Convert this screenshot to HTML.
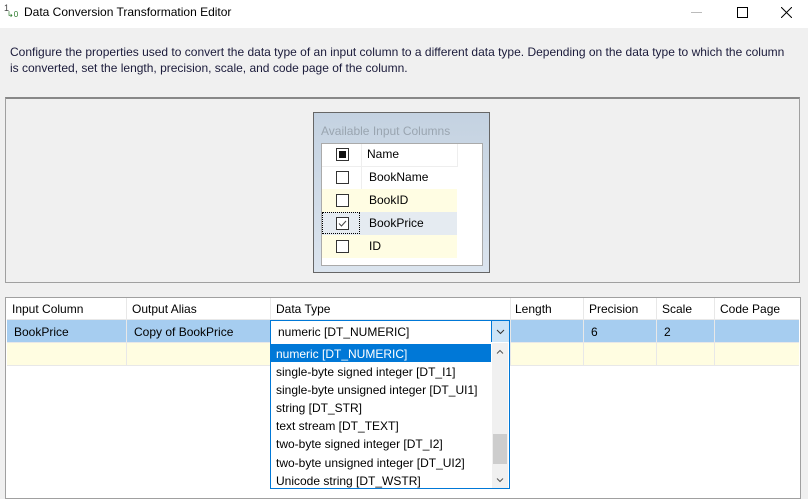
<!DOCTYPE html><html><head><style>
body{margin:0;width:808px;height:493px;background:#f0f0f0;font-family:"Segoe UI","Liberation Sans",sans-serif;font-size:12px;color:#000;position:relative;overflow:hidden}
.a{position:absolute}
.t{white-space:nowrap}
.cb{position:absolute;width:11px;height:11px;border:1px solid #333;background:#fff}
</style></head><body>
<div class="a" style="left:0;top:0;width:808px;height:28px;background:#fff"></div>
<div class="a t" style="left:4px;top:3px;font-size:9px;color:#444">1</div>
<div class="a t" style="left:7px;top:10px;font-size:8px;color:#2a7a2a">↳0</div>
<div class="a t" style="left:24px;top:5px;font-size:12px">Data Conversion Transformation Editor</div>
<div class="a" style="left:691px;top:12px;width:11px;height:1px;background:#bbb"></div>
<div class="a" style="left:737px;top:7px;width:9px;height:9px;border:1px solid #000"></div>
<svg class="a" style="left:781px;top:7px" width="11" height="11"><path d="M0 0L11 11M11 0L0 11" stroke="#000" stroke-width="1"/></svg>
<div class="a" style="left:10px;top:44px;width:785px;line-height:16px;font-size:12px;color:#1a1a3a">Configure the properties used to convert the data type of an input column to a different data type. Depending on the data type to which the column is converted, set the length, precision, scale, and code page of the column.</div>
<div class="a" style="left:5px;top:97px;width:793px;height:183px;border:1px solid #a0a0a0;border-top:2px solid #888"></div>
<div class="a" style="left:313px;top:112px;width:175px;height:159px;border:1px solid #666;background:linear-gradient(#c4d2e1,#dbe4ee)"></div>
<div class="a t" style="left:321px;top:124px;color:#9aa5b0;font-size:12px">Available Input Columns</div>
<div class="a" style="left:321px;top:143px;width:160px;height:121px;background:#fff;border:1px solid #aaa"></div>
<div class="a" style="left:322px;top:144px;width:136px;height:22px;border-bottom:1px solid #eee"></div>
<div class="a" style="left:361px;top:144px;width:1px;height:114px;background:#eee"></div>
<div class="a" style="left:457px;top:144px;width:1px;height:22px;background:#eee"></div>
<div class="a" style="left:322px;top:189px;width:135px;height:23px;background:#fffde3"></div>
<div class="a" style="left:322px;top:212px;width:135px;height:23px;background:#e5ebf1"></div>
<div class="a" style="left:322px;top:235px;width:135px;height:23px;background:#fffde3"></div>
<div class="a" style="left:322px;top:212px;width:38px;height:22px;border:1px dotted #000;box-sizing:border-box"></div>
<div class="cb" style="left:336px;top:148px"><div style="margin:2px;width:7px;height:7px;background:#111"></div></div>
<div class="cb" style="left:336px;top:171px"></div>
<div class="cb" style="left:336px;top:194px"></div>
<div class="cb" style="left:336px;top:217px"><svg width="11" height="11" style="display:block"><path d="M2 5.5L4.5 8L9 3" stroke="#444" fill="none" stroke-width="1"/></svg></div>
<div class="cb" style="left:336px;top:240px"></div>
<div class="a t" style="left:367px;top:147px">Name</div>
<div class="a t" style="left:369px;top:170px">BookName</div>
<div class="a t" style="left:369px;top:193px">BookID</div>
<div class="a t" style="left:369px;top:216px">BookPrice</div>
<div class="a t" style="left:369px;top:239px">ID</div>

<div class="a" style="left:5px;top:297px;width:794px;height:200px;background:#fff;border:1px solid #a0a0a0"></div>
<div class="a" style="left:7px;top:320px;width:792px;height:22px;background:#a6cdf0"></div>
<div class="a" style="left:7px;top:343px;width:792px;height:22px;background:#fffde1"></div>
<div class="a" style="left:7px;top:342px;width:792px;height:1px;background:#e8e8e8"></div>
<div class="a" style="left:7px;top:365px;width:792px;height:1px;background:#e8e8e8"></div>
<div class="a" style="left:7px;top:319px;width:792px;height:1px;background:#e8e8e8"></div>
<div class="a" style="left:126px;top:298px;width:1px;height:67px;background:#e8e8e8"></div>
<div class="a" style="left:270px;top:298px;width:1px;height:67px;background:#e8e8e8"></div>
<div class="a" style="left:510px;top:298px;width:1px;height:67px;background:#e8e8e8"></div>
<div class="a" style="left:583px;top:298px;width:1px;height:67px;background:#e8e8e8"></div>
<div class="a" style="left:656px;top:298px;width:1px;height:67px;background:#e8e8e8"></div>
<div class="a" style="left:714px;top:298px;width:1px;height:67px;background:#e8e8e8"></div>
<div class="a t" style="left:12px;top:302px">Input Column</div>
<div class="a t" style="left:132px;top:302px">Output Alias</div>
<div class="a t" style="left:276px;top:302px">Data Type</div>
<div class="a t" style="left:515px;top:302px">Length</div>
<div class="a t" style="left:589px;top:302px">Precision</div>
<div class="a t" style="left:662px;top:302px">Scale</div>
<div class="a t" style="left:720px;top:302px">Code Page</div>
<div class="a t" style="left:14px;top:325px">BookPrice</div>
<div class="a t" style="left:134px;top:325px">Copy of BookPrice</div>
<div class="a t" style="left:591px;top:325px">6</div>
<div class="a t" style="left:664px;top:325px">2</div>

<div class="a" style="left:270px;top:320px;width:238px;height:22px;background:#fff;border:1px solid #0078d7"></div>
<div class="a t" style="left:278px;top:325px">numeric [DT_NUMERIC]</div>
<div class="a" style="left:491px;top:321px;width:17px;height:21px;background:#cce4f7;border-left:1px solid #0078d7"><svg width="17" height="21" style="display:block"><path d="M5 9L8.5 12.5L12 9" stroke="#333" fill="none"/></svg></div>
<div class="a" style="left:270px;top:343px;width:238px;height:145px;background:#fff;border:1px solid #0078d7;border-top:none"></div>
<div class="a" style="left:271px;top:344px;width:220px;height:18px;background:#0078d7"></div>
<div class="a" style="left:492px;top:343px;width:16px;height:145px;background:#f0f0f0"></div>
<div class="a" style="left:493px;top:434px;width:14px;height:30px;background:#cdcdcd"></div>
<svg class="a" style="left:492px;top:347px" width="16" height="10"><path d="M5 6.5L8 3.5L11 6.5" stroke="#555" fill="none"/></svg>
<svg class="a" style="left:492px;top:475px" width="16" height="10"><path d="M5 3.5L8 6.5L11 3.5" stroke="#555" fill="none"/></svg>
<div class="a" style="left:276px;top:345px;line-height:18.1px;white-space:nowrap">
<div style="color:#fff">numeric [DT_NUMERIC]</div>
<div>single-byte signed integer [DT_I1]</div>
<div>single-byte unsigned integer [DT_UI1]</div>
<div>string [DT_STR]</div>
<div>text stream [DT_TEXT]</div>
<div>two-byte signed integer [DT_I2]</div>
<div>two-byte unsigned integer [DT_UI2]</div>
<div>Unicode string [DT_WSTR]</div>
</div>
</body></html>
